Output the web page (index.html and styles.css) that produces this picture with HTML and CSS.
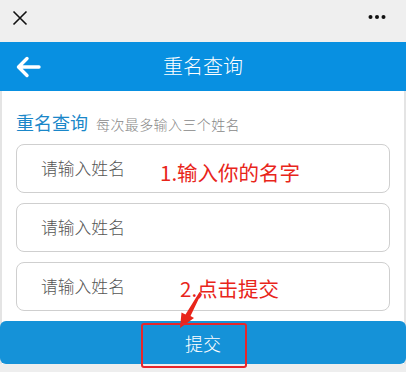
FILE: index.html
```html
<!DOCTYPE html>
<html lang="zh">
<head>
<meta charset="utf-8">
<link rel="stylesheet" href="styles.css">
</head>
<body>
<div class="page">
  <div class="topbar">
    <svg class="close" width="16" height="16" viewBox="0 0 16 16"><path d="M1.5 1.5 L14.5 14.5 M14.5 1.5 L1.5 14.5" stroke="#111" stroke-width="1.6" fill="none"/></svg>
    <svg class="more" width="18" height="6" viewBox="0 0 18 6"><circle cx="2.5" cy="3" r="2" fill="#111"/><circle cx="9" cy="3" r="2" fill="#111"/><circle cx="15.5" cy="3" r="2" fill="#111"/></svg>
  </div>
  <div class="header">
    <svg class="back" width="26" height="22" viewBox="0 0 26 22"><path d="M24 11 H4 M12 2.5 L3.5 11 L12 19.5" stroke="#fff" stroke-width="3.4" fill="none" stroke-linecap="round" stroke-linejoin="round"/></svg>
    <div class="htitle">重名查询</div>
  </div>
  <div class="content">
    <div class="title-row"><span class="title">重名查询</span><span class="sub">每次最多输入三个姓名</span></div>
    <div class="field"><span class="ph">请输入姓名</span></div>
    <div class="field"><span class="ph">请输入姓名</span></div>
    <div class="field"><span class="ph">请输入姓名</span></div>
    <div class="btn">提交</div>
    <div class="note note1">1.输入你的名字</div>
    <div class="note note2">2.点击提交</div>
    <svg class="arrow" width="30" height="40" viewBox="0 0 30 40"><path d="M21.5 1 L23.5 2 L12.5 25 L16 27 L2 37 L3.5 21.5 L7.5 23.5 Z" fill="#e8251a"/></svg>
    <div class="redbox"></div>
  </div>
  <div class="bottom"></div>
</div>
</body>
</html>
```
FILE: styles.css
```css
html, body { margin: 0; padding: 0; }
body {
  width: 406px;
  height: 372px;
  overflow: hidden;
  font-family: "Noto Sans CJK SC", "Noto Sans", sans-serif;
  background: #eeeeee;
}
.page { width: 406px; }
.topbar {
  height: 42px;
  background: #efefef;
  display: flex;
  align-items: center;
  justify-content: space-between;
  padding: 0 20px 0 12px;
  box-sizing: border-box;
}
.close { margin-top: -6px; }
.more { margin-top: -8px; }
.header {
  height: 49px;
  background: #0890e1;
  position: relative;
  display: flex;
  align-items: center;
  justify-content: center;
}
.back { position: absolute; left: 15px; top: 14px; }
.htitle { color: #fff; font-size: 20px; line-height: 1; margin-top: -2px; font-weight: 300; }
.content {
  position: relative;
  background: #fff;
  border-left: 2px solid #e4e4e4;
  border-right: 2px solid #e4e4e4;
  padding: 19px 14px 0;
  display: flex;
  flex-direction: column;
  gap: 10px;
  height: 273px;
  box-sizing: border-box;
}
.title-row { display: flex; align-items: baseline; height: 24px; }
.title { color: #1a87c9; font-size: 18px; line-height: 24px; }
.sub { color: #888; font-size: 14px; margin-left: 8px; letter-spacing: 0.4px; font-weight: 300; }
.field {
  height: 49px;
  box-sizing: border-box;
  border: 1px solid #cfcfcf;
  border-radius: 8px;
  display: flex;
  align-items: center;
  padding-left: 24px;
  flex-shrink: 0;
}
.ph { color: #555; font-size: 16.8px; line-height: 1; margin-top: -1px; font-weight: 300; }
.btn {
  margin: 0 -16px;
  height: 43px;
  background: #1592d8;
  border-radius: 6px;
  color: #fff;
  font-size: 18px;
  display: flex;
  align-items: center;
  justify-content: center;
  flex-shrink: 0;
  font-weight: 300;
}
.note { position: absolute; color: #e8251a; font-size: 20.5px; line-height: 1; }
.note1 { left: 158px; top: 71px; }
.note2 { left: 178px; top: 187px; }
.arrow { position: absolute; left: 176px; top: 200px; }
.redbox {
  position: absolute;
  left: 139px;
  top: 232px;
  width: 102px;
  height: 41px;
  border: 2.5px solid #e6262b;
  border-radius: 3px;
}
.bottom { height: 8px; background: #eeeeee; }
```
